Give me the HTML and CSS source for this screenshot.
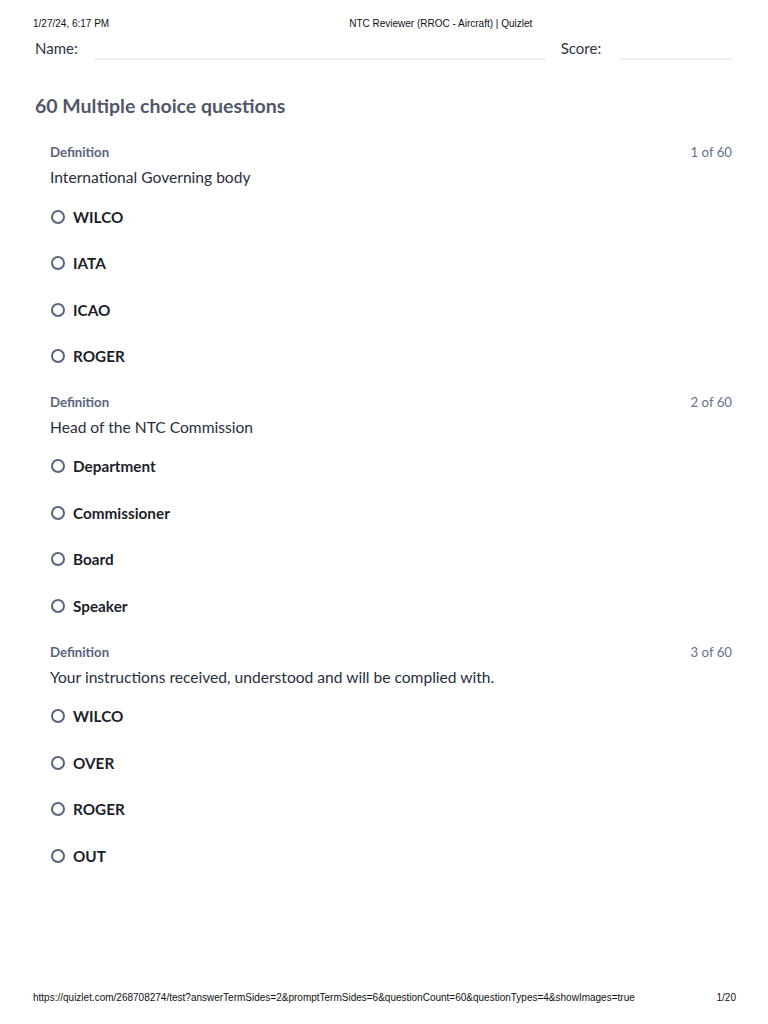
FILE: index.html
```html
<!DOCTYPE html>
<html>
<head>
<meta charset="utf-8">
<title>NTC Reviewer (RROC - Aircraft) | Quizlet</title>
<link rel="stylesheet" href="styles.css">
</head>
<body>
<div class="print-head">
  <span class="print-date">1/27/24, 6:17 PM</span>
  <span class="print-title">NTC Reviewer (RROC - Aircraft) | Quizlet</span>
</div>
<div class="name-row">
  <span class="field-label">Name:</span>
  <span class="field-line name-line"></span>
  <span class="field-label score-label">Score:</span>
  <span class="field-line score-line"></span>
</div>
<div class="quiz">
  <h2>60 Multiple choice questions</h2>

  <div class="question">
    <div class="q-head"><span>Definition</span><span class="q-count">1 of 60</span></div>
    <div class="prompt">International Governing body</div>
    <ul class="options">
      <li><span class="radio"></span>WILCO</li>
      <li><span class="radio"></span>IATA</li>
      <li><span class="radio"></span>ICAO</li>
      <li><span class="radio"></span>ROGER</li>
    </ul>
  </div>

  <div class="question">
    <div class="q-head"><span>Definition</span><span class="q-count">2 of 60</span></div>
    <div class="prompt">Head of the NTC Commission</div>
    <ul class="options">
      <li><span class="radio"></span>Department</li>
      <li><span class="radio"></span>Commissioner</li>
      <li><span class="radio"></span>Board</li>
      <li><span class="radio"></span>Speaker</li>
    </ul>
  </div>

  <div class="question">
    <div class="q-head"><span>Definition</span><span class="q-count">3 of 60</span></div>
    <div class="prompt">Your instructions received, understood and will be complied with.</div>
    <ul class="options">
      <li><span class="radio"></span>WILCO</li>
      <li><span class="radio"></span>OVER</li>
      <li><span class="radio"></span>ROGER</li>
      <li><span class="radio"></span>OUT</li>
    </ul>
  </div>
</div>
<div class="print-foot">
  <span>https://quizlet.com/268708274/test?answerTermSides=2&amp;promptTermSides=6&amp;questionCount=60&amp;questionTypes=4&amp;showImages=true</span>
  <span>1/20</span>
</div>
</body>
</html>
```

FILE: styles.css
```css
html,body {
  margin: 0;
  padding: 0;
  background: #fff;
}
body {
  width: 768px;
  height: 1024px;
  display: flex;
  flex-direction: column;
  font-family: Lato, "Noto Sans", sans-serif;
  color: #282e3e;
  overflow: hidden;
}
.print-head,.print-foot {
  font-family: "Liberation Sans", Arial, sans-serif;
  font-size: 10px;
  line-height: 12px;
  color: #111;
}
.print-head {
  display: flex;
  padding: 18px 33px 0;
}
.print-title {
  margin-left: 240px;
}
.name-row {
  display: flex;
  margin-top: 8px;
  padding: 0 36px 0 35px;
  font-size: 15px;
  line-height: 20px;
  color: #303545;
}
.field-line {
  height: 20px;
  border-bottom: 2px solid #edeff4;
}
.name-line {
  width: 452px;
  margin-left: 16px;
}
.score-label {
  width: 44px;
  margin-left: 15px;
}
.score-line {
  flex: 1;
  margin-left: 15px;
}
.quiz {
  padding: 0 36px 0 35px;
}
h2 {
  margin: 34px 0 0;
  font-size: 19.5px;
  line-height: 24px;
  font-weight: 700;
  color: #515769;
}
.question {
  padding-left: 15px;
  margin-top: 24px;
}
.question + .question {
  margin-top: 25.5px;
}
.q-head {
  display: flex;
  justify-content: space-between;
  font-size: 13.2px;
  line-height: 20px;
  font-weight: 700;
  color: #586380;
}
.q-count {
  font-weight: 400;
  color: #646f90;
}
.prompt {
  margin-top: 5px;
  font-size: 15.6px;
  line-height: 20px;
  color: #282e3e;
}
.options {
  list-style: none;
  margin: 19.5px 0 0;
  padding: 0;
  display: grid;
  row-gap: 26.6px;
}
.options li {
  display: flex;
  align-items: center;
  height: 20px;
  font-size: 15.3px;
  font-weight: 700;
  color: #1c1f2a;
}
.radio {
  width: 10px;
  height: 10px;
  margin-left: 1px;
  margin-right: 8px;
  border: 2px solid #586380;
  border-radius: 50%;
}
.print-foot {
  margin-top: auto;
  display: flex;
  justify-content: space-between;
  padding: 0 32px 20px 33px;
}
```
